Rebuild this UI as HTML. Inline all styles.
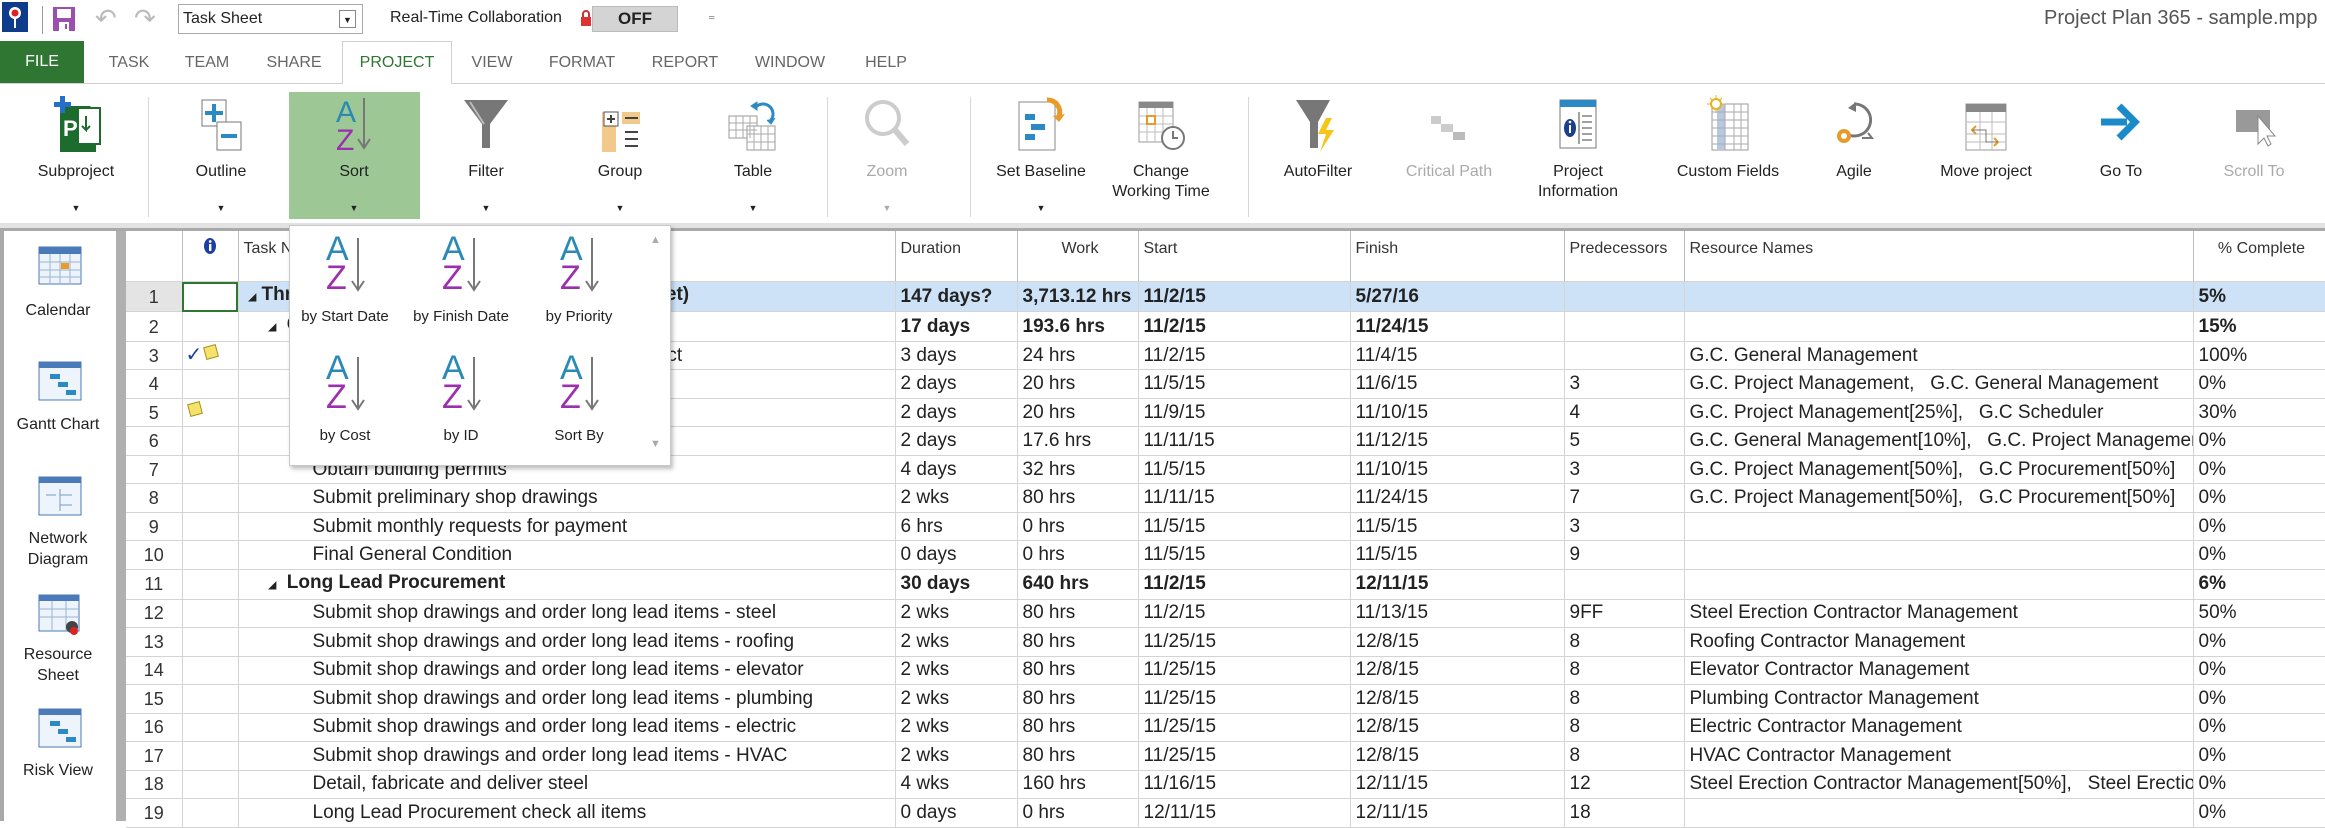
<!DOCTYPE html>
<html><head><meta charset="utf-8">
<style>
*{margin:0;padding:0;box-sizing:border-box}
body{width:2325px;height:821px;overflow:hidden;background:#fff;font-family:"Liberation Sans",sans-serif;color:#222;position:relative}
.a{position:absolute}
.tab{position:absolute;top:42px;height:41px;line-height:41px;font-size:16px;color:#666;transform:translateX(-50%)}
.btn{position:absolute;top:90px;width:140px;margin-left:-70px;text-align:center;font-size:16px;color:#222}
.btn svg{display:block;margin:4px auto 0}
.btn .l{position:absolute;top:72px;left:0;width:140px;line-height:20px}
.btn .ar{position:absolute;top:113px;left:0;width:140px;font-size:9px}
.dis{color:#aaa!important}
.sep{position:absolute;top:97px;width:1px;height:120px;background:#d8d8d8}
.side{position:absolute;left:0;width:116px;text-align:center;font-size:16px;line-height:21px}
table{position:absolute;left:126px;top:228px;width:2199px;border-collapse:collapse;table-layout:fixed;font-size:19px}
td{height:28.47px;border-right:1px solid #d4d4d4;border-bottom:1px solid #d4d4d4;white-space:nowrap;overflow:hidden;padding:0 0 0 5px;line-height:26px}
tr.h td{height:52px;vertical-align:top;font-size:16px;padding-top:9px;border-right:1px solid #bdbdbd;line-height:18px;color:#333}
td.n{text-align:center;padding:0;font-size:18px;color:#333}
td.t2{padding-left:74px}
tr.b td{font-weight:bold}
tr.sel td{background:#cde2f6}
tr.sel td.n{background:#e4e4e4;font-weight:normal}
.dd{position:absolute;left:289px;top:225px;width:382px;height:241px;background:#fff;border:1px solid #c8c8c8;box-shadow:2px 3px 4px rgba(0,0,0,.25)}
.it{position:absolute;width:110px;margin-left:-55px;text-align:center;font-size:15px}
.az{position:relative;width:50px;height:62px;margin:0 auto}
.az .A{position:absolute;left:6px;top:-6px;font-size:34px;color:#2a8ab5;font-family:"Liberation Sans",sans-serif}
.az .Z{position:absolute;left:6px;top:23px;font-size:34px;color:#9c2fae}
.az svg{position:absolute;left:30px;top:0}
</style></head><body>
<!-- title bar -->
<svg class="a" style="left:2px;top:2px" width="26" height="30"><rect width="26" height="30" fill="#0f3c8a"/><circle cx="13" cy="11" r="6" fill="#fff"/><circle cx="13" cy="11" r="3.5" fill="#d22"/><rect x="12" y="16" width="2" height="10" fill="#fff"/></svg>
<div class="a" style="left:42px;top:6px;width:1px;height:28px;background:#999"></div>
<svg class="a" style="left:52px;top:6px" width="24" height="26"><rect x="1" y="1" width="22" height="24" fill="#9b4fb0"/><rect x="5" y="3" width="14" height="9" fill="#fff"/><rect x="7" y="16" width="10" height="9" fill="#fff"/><rect x="13" y="18" width="2" height="5" fill="#9b4fb0"/></svg>
<div class="a" style="left:95px;top:3px;font-size:26px;color:#bbb">↶</div>
<div class="a" style="left:134px;top:3px;font-size:26px;color:#bbb">↷</div>
<div class="a" style="left:178px;top:4px;width:185px;height:30px;border:1px solid #aaa;font-size:16px;line-height:28px;padding-left:4px;background:#fff">Task Sheet</div>
<div class="a" style="left:339px;top:10px;width:17px;height:18px;border:1px solid #888;font-size:9px;text-align:center;line-height:18px">▼</div>
<div class="a" style="left:390px;top:9px;font-size:16px">Real-Time Collaboration</div>
<svg class="a" style="left:580px;top:9px" width="12" height="18"><path d="M3 8V5a3 3 0 0 1 6 0v3" stroke="#c33" stroke-width="2" fill="none"/><rect x="1" y="8" width="10" height="9" fill="#d33"/></svg>
<div class="a" style="left:592px;top:6px;width:86px;height:26px;background:#d4d4d4;border:1px solid #bbb;font-size:17px;font-weight:bold;text-align:center;line-height:24px">OFF</div>
<div class="a" style="left:708px;top:7px;font-size:14px;color:#666">₌</div>
<div class="a" style="left:2044px;top:7px;font-size:20px;color:#555;white-space:nowrap">Project Plan 365 - sample.mpp</div>
<!-- tabs -->
<div class="a" style="left:0;top:41px;width:84px;height:42px;background:#2e7631;color:#fff;font-size:16px;text-align:center;line-height:42px">FILE</div>
<div class="a" style="left:342px;top:41px;width:110px;height:43px;border:1px solid #d0d0d0;border-bottom:none;background:#fff"></div>
<div class="a" style="left:0;top:83px;width:342px;height:1px;background:#d0d0d0"></div>
<div class="a" style="left:452px;top:83px;width:1873px;height:1px;background:#d0d0d0"></div>
<div class="tab" style="left:129px">TASK</div><div class="tab" style="left:207px">TEAM</div><div class="tab" style="left:294px">SHARE</div>
<div class="tab" style="left:397px;color:#2e7631">PROJECT</div><div class="tab" style="left:492px">VIEW</div><div class="tab" style="left:582px">FORMAT</div>
<div class="tab" style="left:685px">REPORT</div><div class="tab" style="left:790px">WINDOW</div><div class="tab" style="left:886px">HELP</div>
<!-- ribbon -->
<div class="a" style="left:289px;top:92px;width:131px;height:127px;background:#9dc795"></div>
<div class="sep" style="left:148px"></div><div class="sep" style="left:827px"></div><div class="sep" style="left:970px"></div><div class="sep" style="left:1248px"></div>
<div class="btn" style="left:76px"><svg width="56" height="60"><path d="M12 12h30l6 6v40H12z" fill="#1e6b2e"/><rect x="30" y="14" width="22" height="36" fill="#fff" stroke="#1e6b2e" stroke-width="2"/><text x="15" y="42" font-size="22" font-weight="bold" fill="#fff" font-family="Liberation Sans">P</text><path d="M38 22v14l-4-4M38 36l4-4" stroke="#1e6b2e" stroke-width="2" fill="none"/><rect x="12" y="2" width="5" height="17" fill="#2470c8"/><rect x="6" y="8" width="17" height="5" fill="#2470c8"/></svg><div class="l">Subproject</div><div class="ar">▼</div></div>
<div class="btn" style="left:221px"><svg width="56" height="60"><rect x="9" y="6" width="24" height="26" fill="#fff" stroke="#777"/><rect x="19" y="10" width="4" height="18" fill="#2b8ac4"/><rect x="12" y="17" width="18" height="4" fill="#2b8ac4"/><rect x="24" y="28" width="24" height="28" fill="#fff" stroke="#777"/><rect x="28" y="40" width="16" height="4" fill="#2b8ac4"/></svg><div class="l">Outline</div><div class="ar">▼</div></div>
<div class="btn" style="left:354px"><svg width="56" height="60"><text x="10" y="28" font-size="30" fill="#2a8ab5" font-family="Liberation Sans">A</text><text x="10" y="56" font-size="30" fill="#9c2fae" font-family="Liberation Sans">Z</text><path d="M38 4v50M32 45l6 9 6-9" stroke="#777" stroke-width="2" fill="none"/></svg><div class="l">Sort</div><div class="ar">▼</div></div>
<div class="btn" style="left:486px"><svg width="56" height="60"><path d="M6 6h44L32 30v24h-8V30z" fill="#777"/><path d="M12 8l14 22" stroke="#bbb" stroke-width="2"/></svg><div class="l">Filter</div><div class="ar">▼</div></div>
<div class="btn" style="left:620px"><svg width="56" height="60"><rect x="10" y="18" width="14" height="40" fill="#f1c98a"/><rect x="30" y="18" width="18" height="12" fill="#f1c98a"/><rect x="12" y="18" width="14" height="14" fill="#fff" stroke="#555"/><path d="M19 21v8M15 25h8M33 24h13M33 38h13M33 45h13M33 52h13" stroke="#444" stroke-width="2"/></svg><div class="l">Group</div><div class="ar">▼</div></div>
<div class="btn" style="left:753px"><svg width="56" height="60"><g stroke="#999" fill="#fff"><rect x="4" y="22" width="28" height="22"/><rect x="22" y="32" width="28" height="24"/></g><path d="M4 29h28M4 36h28M11 22v22M18 22v22M25 22v22M22 40h28M22 48h28M29 32v24M36 32v24M43 32v24" stroke="#aaa"/><path d="M30 14a10 10 0 0 1 16 12" stroke="#2b8ac4" stroke-width="3" fill="none"/><path d="M42 26l4 4 4-6M26 12l6-4v8z" fill="#2b8ac4" stroke="#2b8ac4"/></svg><div class="l">Table</div><div class="ar">▼</div></div>
<div class="btn dis" style="left:887px"><svg width="56" height="60"><circle cx="24" cy="24" r="16" stroke="#ccc" stroke-width="4" fill="none"/><path d="M36 36l12 14" stroke="#ccc" stroke-width="6"/></svg><div class="l">Zoom</div><div class="ar">▼</div></div>
<div class="btn" style="left:1041px"><svg width="56" height="60"><rect x="6" y="8" width="36" height="48" fill="#fff" stroke="#888"/><rect x="12" y="20" width="10" height="6" fill="#2b8ac4"/><rect x="18" y="30" width="14" height="6" fill="#2b8ac4"/><rect x="12" y="40" width="10" height="6" fill="#2b8ac4"/><path d="M34 6a12 12 0 0 1 12 16" stroke="#e89a2a" stroke-width="5" fill="none"/><path d="M40 22l6 6 6-8z" fill="#e89a2a"/></svg><div class="l">Set Baseline</div><div class="ar">▼</div></div>
<div class="btn" style="left:1161px"><svg width="56" height="60"><rect x="6" y="8" width="34" height="40" fill="#fff" stroke="#999"/><rect x="6" y="8" width="34" height="6" fill="#888"/><path d="M6 22h34M6 30h34M6 38h34M14 14v34M22 14v34M30 14v34" stroke="#bbb"/><rect x="14" y="22" width="8" height="8" fill="none" stroke="#e89a2a" stroke-width="2"/><circle cx="40" cy="44" r="11" fill="#fff" stroke="#777" stroke-width="2"/><path d="M40 37v7h5" stroke="#777" stroke-width="2" fill="none"/></svg><div class="l">Change<br>Working Time</div></div>
<div class="btn" style="left:1318px"><svg width="56" height="60"><path d="M6 6h34L28 28v26h-8V28z" fill="#777"/><path d="M36 24l-8 16h8l-6 18 14-22h-8l6-12z" fill="#f5c518"/></svg><div class="l">AutoFilter</div></div>
<div class="btn dis" style="left:1449px"><svg width="56" height="60"><rect x="10" y="22" width="10" height="8" fill="#ccc"/><rect x="20" y="30" width="12" height="8" fill="#ccc"/><rect x="32" y="38" width="12" height="8" fill="#bbb"/></svg><div class="l">Critical Path</div></div>
<div class="btn" style="left:1578px"><svg width="56" height="60"><rect x="10" y="6" width="36" height="48" fill="#fff" stroke="#777"/><rect x="10" y="6" width="36" height="7" fill="#2b8ac4"/><ellipse cx="20" cy="34" rx="6" ry="9" fill="#1a3f8f"/><rect x="19" y="31" width="2" height="8" fill="#fff"/><circle cx="20" cy="28" r="1.3" fill="#fff"/><path d="M29 18v32M32 22h10M32 28h10M32 34h10M32 40h10M32 46h10" stroke="#444"/></svg><div class="l">Project<br>Information</div></div>
<div class="btn" style="left:1728px"><svg width="56" height="60"><rect x="12" y="10" width="36" height="46" fill="#fff" stroke="#999"/><rect x="17" y="10" width="8" height="46" fill="#b8c8e0"/><path d="M12 18h36M12 26h36M12 34h36M12 42h36M12 50h36M25 10v46M34 10v46M41 10v46" stroke="#aaa"/><circle cx="16" cy="10" r="5" fill="#fff" stroke="#e8b020" stroke-width="2"/><path d="M16 1v4M16 15v4M7 10h4M21 10h4M10 4l3 3M22 4l-3 3" stroke="#e8b020"/></svg><div class="l">Custom Fields</div></div>
<div class="btn" style="left:1854px"><svg width="56" height="60"><path d="M28 10a16 16 0 1 1-10 28" stroke="#777" stroke-width="3" fill="none"/><path d="M22 14l8-6v10z" fill="#777"/><path d="M36 44l10 0-4-5" stroke="#777" stroke-width="2" fill="none"/><circle cx="18" cy="42" r="7" fill="#e89a2a"/><circle cx="18" cy="42" r="3" fill="#fff"/></svg><div class="l">Agile</div></div>
<div class="btn" style="left:1986px"><svg width="56" height="60"><rect x="8" y="10" width="40" height="46" fill="#fff" stroke="#999"/><rect x="8" y="10" width="40" height="8" fill="#888"/><path d="M8 28h40M8 40h40M8 48h40M22 18v38M34 18v38" stroke="#bbb"/><path d="M18 32l-4 4 4 4M36 44l4 4-4 4" stroke="#e89a2a" stroke-width="2" fill="none"/><path d="M14 36h14v12h12" stroke="#777" fill="none"/></svg><div class="l">Move project</div></div>
<div class="btn" style="left:2121px"><svg width="56" height="60"><path d="M8 28h26" stroke="#1a8ac8" stroke-width="7"/><path d="M26 12l16 16-16 16" stroke="#1a8ac8" stroke-width="7" fill="none"/></svg><div class="l">Go To</div></div>
<div class="btn dis" style="left:2254px"><svg width="56" height="60"><rect x="10" y="16" width="34" height="22" fill="#999"/><path d="M32 22v28l6-6 4 8 3-2-4-8h8z" fill="#fff" stroke="#888"/></svg><div class="l">Scroll To</div></div>
<div class="a" style="left:0;top:223px;width:2325px;height:5px;background:#e2e2e2"></div>
<!-- sidebar -->
<div class="a" style="left:0;top:228px;width:4px;height:593px;background:#a9a9a9"></div>
<div class="a" style="left:116px;top:228px;width:10px;height:593px;background:#b0b0b0"></div>
<div class="a" style="left:0;top:228px;width:126px;height:3px;background:#a9a9a9"></div>
<svg class="a" style="left:38px;top:243px" width="44" height="42"><rect x="1" y="4" width="42" height="37" fill="#eef4fb" stroke="#4a7ab8"/><rect x="1" y="4" width="42" height="7" fill="#4a7ab8"/><path d="M1 19h42M1 27h42M1 34h42M12 11v30M22 11v30M32 11v30" stroke="#9bb4d6"/><rect x="23" y="20" width="8" height="6" fill="#e89a2a"/></svg>
<div class="side" style="top:300px">Calendar</div>
<svg class="a" style="left:38px;top:360px" width="44" height="42"><rect x="1" y="2" width="42" height="38" fill="#eef4fb" stroke="#4a7ab8"/><rect x="1" y="2" width="42" height="6" fill="#4a7ab8"/><rect x="12" y="14" width="10" height="5" fill="#2b8ac4"/><rect x="20" y="22" width="10" height="5" fill="#2b8ac4"/><rect x="28" y="30" width="10" height="5" fill="#2b8ac4"/></svg>
<div class="side" style="top:414px">Gantt Chart</div>
<svg class="a" style="left:38px;top:475px" width="44" height="42"><rect x="1" y="2" width="42" height="38" fill="#eef4fb" stroke="#4a7ab8"/><rect x="1" y="2" width="42" height="6" fill="#4a7ab8"/><path d="M8 20h10M22 14v22M22 20h12M22 30h12" stroke="#7a9ac6"/></svg>
<div class="side" style="top:528px">Network<br>Diagram</div>
<svg class="a" style="left:38px;top:593px" width="44" height="44"><rect x="1" y="2" width="40" height="36" fill="#eef4fb" stroke="#4a7ab8"/><rect x="1" y="2" width="40" height="6" fill="#4a7ab8"/><path d="M1 16h40M1 24h40M14 8v30M28 8v30" stroke="#9bb4d6"/><circle cx="34" cy="34" r="6" fill="#444"/><circle cx="36" cy="38" r="4" fill="#d22"/></svg>
<div class="side" style="top:644px">Resource<br>Sheet</div>
<svg class="a" style="left:38px;top:707px" width="44" height="42"><rect x="1" y="2" width="42" height="38" fill="#eef4fb" stroke="#4a7ab8"/><rect x="1" y="2" width="42" height="6" fill="#4a7ab8"/><rect x="12" y="14" width="10" height="5" fill="#2b8ac4"/><rect x="20" y="22" width="10" height="5" fill="#2b8ac4"/><rect x="28" y="30" width="10" height="5" fill="#2b8ac4"/></svg>
<div class="side" style="top:760px">Risk View</div>
<!-- grid -->
<table>
<colgroup><col style="width:56px"><col style="width:56px"><col style="width:657px"><col style="width:122px"><col style="width:121px"><col style="width:212px"><col style="width:214px"><col style="width:120px"><col style="width:509px"><col style="width:132px"></colgroup>
<tr class="h" style="border-top:3px solid #a9a9a9"><td></td><td style="text-align:center;padding:6px 0 0"><svg width="14" height="18"><ellipse cx="7" cy="9" rx="6" ry="8" fill="#1a3fa0"/><rect x="6" y="7" width="2.4" height="7" fill="#fff"/><circle cx="7.2" cy="4.5" r="1.4" fill="#fff"/></svg></td><td>Task Name</td><td>Duration</td><td style="text-align:center">Work</td><td>Start</td><td>Finish</td><td>Predecessors</td><td>Resource Names</td><td style="text-align:center">% Complete</td></tr>
<tr class="b sel"><td class="n">1</td><td style="background:#fff;outline:2px solid #2e7631;outline-offset:-2px"></td><td style="padding-left:10px"><span style="font-size:10px">◢</span> Three-story Office Building (76,000 square feet)</td><td>147 days?</td><td>3,713.12 hrs</td><td>11/2/15</td><td>5/27/16</td><td></td><td></td><td>5%</td></tr>
<tr class="b"><td class="n" style="font-weight:normal">2</td><td></td><td style="padding-left:30px"><span style="font-size:10px">◢</span>&nbsp; General Conditions</td><td>17 days</td><td>193.6 hrs</td><td>11/2/15</td><td>11/24/15</td><td></td><td></td><td>15%</td></tr>
<tr><td class="n">3</td><td style="padding-left:3px"><span style="color:#1a3fa0;font-size:20px">✓</span><svg width="18" height="18"><rect x="3" y="3" width="12" height="12" fill="#f4e26a" stroke="#a89020" transform="rotate(-15 9 9)"/></svg></td><td class="t2">Receive notice to proceed and sign contract</td><td>3 days</td><td>24 hrs</td><td>11/2/15</td><td>11/4/15</td><td></td><td>G.C. General Management</td><td>100%</td></tr>
<tr><td class="n">4</td><td></td><td class="t2">Submit bond and insurance documents</td><td>2 days</td><td>20 hrs</td><td>11/5/15</td><td>11/6/15</td><td>3</td><td>G.C. Project Management,&nbsp;&nbsp; G.C. General Management</td><td>0%</td></tr>
<tr><td class="n">5</td><td style="padding-left:3px"><svg width="18" height="18"><rect x="3" y="3" width="12" height="12" fill="#f4e26a" stroke="#a89020" transform="rotate(-15 9 9)"/></svg></td><td class="t2">Prepare and submit project schedule</td><td>2 days</td><td>20 hrs</td><td>11/9/15</td><td>11/10/15</td><td>4</td><td>G.C. Project Management[25%],&nbsp;&nbsp; G.C Scheduler</td><td>30%</td></tr>
<tr><td class="n">6</td><td></td><td class="t2">Prepare and submit schedule of values</td><td>2 days</td><td>17.6 hrs</td><td>11/11/15</td><td>11/12/15</td><td>5</td><td>G.C. General Management[10%],&nbsp;&nbsp; G.C. Project Management[10%]</td><td>0%</td></tr>
<tr><td class="n">7</td><td></td><td class="t2">Obtain building permits</td><td>4 days</td><td>32 hrs</td><td>11/5/15</td><td>11/10/15</td><td>3</td><td>G.C. Project Management[50%],&nbsp;&nbsp; G.C Procurement[50%]</td><td>0%</td></tr>
<tr><td class="n">8</td><td></td><td class="t2">Submit preliminary shop drawings</td><td>2 wks</td><td>80 hrs</td><td>11/11/15</td><td>11/24/15</td><td>7</td><td>G.C. Project Management[50%],&nbsp;&nbsp; G.C Procurement[50%]</td><td>0%</td></tr>
<tr><td class="n">9</td><td></td><td class="t2">Submit monthly requests for payment</td><td>6 hrs</td><td>0 hrs</td><td>11/5/15</td><td>11/5/15</td><td>3</td><td></td><td>0%</td></tr>
<tr><td class="n">10</td><td></td><td class="t2">Final General Condition</td><td>0 days</td><td>0 hrs</td><td>11/5/15</td><td>11/5/15</td><td>9</td><td></td><td>0%</td></tr>
<tr class="b"><td class="n" style="font-weight:normal">11</td><td></td><td style="padding-left:30px"><span style="font-size:10px">◢</span>&nbsp; Long Lead Procurement</td><td>30 days</td><td>640 hrs</td><td>11/2/15</td><td>12/11/15</td><td></td><td></td><td>6%</td></tr>
<tr><td class="n">12</td><td></td><td class="t2">Submit shop drawings and order long lead items - steel</td><td>2 wks</td><td>80 hrs</td><td>11/2/15</td><td>11/13/15</td><td>9FF</td><td>Steel Erection Contractor Management</td><td>50%</td></tr>
<tr><td class="n">13</td><td></td><td class="t2">Submit shop drawings and order long lead items - roofing</td><td>2 wks</td><td>80 hrs</td><td>11/25/15</td><td>12/8/15</td><td>8</td><td>Roofing Contractor Management</td><td>0%</td></tr>
<tr><td class="n">14</td><td></td><td class="t2">Submit shop drawings and order long lead items - elevator</td><td>2 wks</td><td>80 hrs</td><td>11/25/15</td><td>12/8/15</td><td>8</td><td>Elevator Contractor Management</td><td>0%</td></tr>
<tr><td class="n">15</td><td></td><td class="t2">Submit shop drawings and order long lead items - plumbing</td><td>2 wks</td><td>80 hrs</td><td>11/25/15</td><td>12/8/15</td><td>8</td><td>Plumbing Contractor Management</td><td>0%</td></tr>
<tr><td class="n">16</td><td></td><td class="t2">Submit shop drawings and order long lead items - electric</td><td>2 wks</td><td>80 hrs</td><td>11/25/15</td><td>12/8/15</td><td>8</td><td>Electric Contractor Management</td><td>0%</td></tr>
<tr><td class="n">17</td><td></td><td class="t2">Submit shop drawings and order long lead items - HVAC</td><td>2 wks</td><td>80 hrs</td><td>11/25/15</td><td>12/8/15</td><td>8</td><td>HVAC Contractor Management</td><td>0%</td></tr>
<tr><td class="n">18</td><td></td><td class="t2">Detail, fabricate and deliver steel</td><td>4 wks</td><td>160 hrs</td><td>11/16/15</td><td>12/11/15</td><td>12</td><td>Steel Erection Contractor Management[50%],&nbsp;&nbsp; Steel Erection Contractor[50%]</td><td>0%</td></tr>
<tr><td class="n">19</td><td></td><td class="t2">Long Lead Procurement check all items</td><td>0 days</td><td>0 hrs</td><td>12/11/15</td><td>12/11/15</td><td>18</td><td></td><td>0%</td></tr>
</table>
<!-- sort dropdown -->
<div class="dd">
<div class="it" style="left:55px;top:10px"><div class="az"><span class="A">A</span><span class="Z">Z</span><svg width="16" height="62"><path d="M8 2v52M2 45l6 9 6-9" stroke="#777" stroke-width="2" fill="none"/></svg></div><div style="margin-top:10px">by Start Date</div></div>
<div class="it" style="left:171px;top:10px"><div class="az"><span class="A">A</span><span class="Z">Z</span><svg width="16" height="62"><path d="M8 2v52M2 45l6 9 6-9" stroke="#777" stroke-width="2" fill="none"/></svg></div><div style="margin-top:10px">by Finish Date</div></div>
<div class="it" style="left:289px;top:10px"><div class="az"><span class="A">A</span><span class="Z">Z</span><svg width="16" height="62"><path d="M8 2v52M2 45l6 9 6-9" stroke="#777" stroke-width="2" fill="none"/></svg></div><div style="margin-top:10px">by Priority</div></div>
<div class="it" style="left:55px;top:129px"><div class="az"><span class="A">A</span><span class="Z">Z</span><svg width="16" height="62"><path d="M8 2v52M2 45l6 9 6-9" stroke="#777" stroke-width="2" fill="none"/></svg></div><div style="margin-top:10px">by Cost</div></div>
<div class="it" style="left:171px;top:129px"><div class="az"><span class="A">A</span><span class="Z">Z</span><svg width="16" height="62"><path d="M8 2v52M2 45l6 9 6-9" stroke="#777" stroke-width="2" fill="none"/></svg></div><div style="margin-top:10px">by ID</div></div>
<div class="it" style="left:289px;top:129px"><div class="az"><span class="A">A</span><span class="Z">Z</span><svg width="16" height="62"><path d="M8 2v52M2 45l6 9 6-9" stroke="#777" stroke-width="2" fill="none"/></svg></div><div style="margin-top:10px">Sort By</div></div>
<div class="a" style="left:360px;top:8px;font-size:11px;color:#aaa">▲</div>
<div class="a" style="left:360px;top:212px;font-size:11px;color:#aaa">▼</div>
</div>
</body></html>
